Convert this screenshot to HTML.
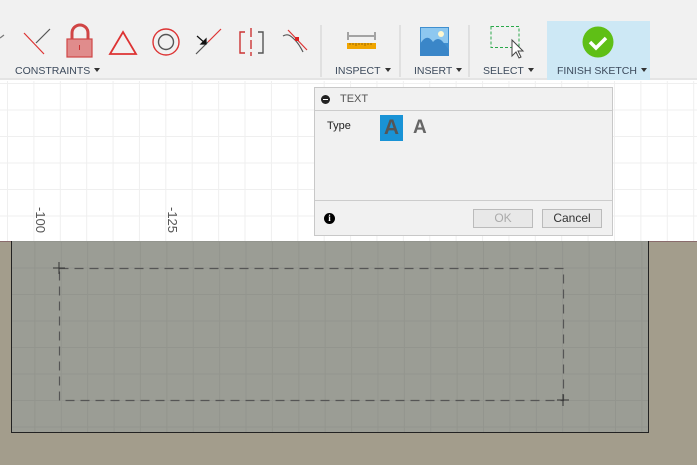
<!DOCTYPE html>
<html><head><style>
*{margin:0;padding:0;box-sizing:border-box}
body{width:697px;height:465px;overflow:hidden;position:relative;font-family:"Liberation Sans",sans-serif;background:#fff}
.tb{position:absolute;left:0;top:0;width:697px;height:80px;background:#f1f1f1;border-bottom:2px solid #e4e4e4}
.lbl{position:absolute;top:65px;font-size:10.5px;color:#3c4a5c;white-space:nowrap}
.lbl:after{content:"";display:inline-block;margin-left:4px;border-left:3px solid transparent;border-right:3px solid transparent;border-top:4px solid #333;vertical-align:2px}
.sep{position:absolute;top:25px;width:2px;height:52px;background:#e0e0e0}
.grid{position:absolute;left:0;top:81px;width:697px;height:160px;background-color:#fff;
background-image:linear-gradient(90deg,#efefef 1px,transparent 1px),linear-gradient(#efefef 1px,transparent 1px);
background-size:26.4px 26.5px;background-position:7px 2px}
.bg{position:absolute;left:0;top:241px;width:697px;height:224px;background:#a39d8c;border-top:1px solid #8a6c6c}
.sk{position:absolute;left:11px;top:241px;width:638px;height:192px;background-color:#9b9d95;border:1px solid #222;border-top:none;
background-image:linear-gradient(90deg,#93958e 1px,transparent 1px),linear-gradient(#93958e 1px,transparent 1px);
background-size:26.4px 26.5px;background-position:-4px 0px}
.rot{position:absolute;font-size:13px;color:#555;transform:rotate(90deg);transform-origin:left top}
.dlg{position:absolute;left:314px;top:87px;width:299px;height:149px;background:#f1f1f1;border:1px solid #c8c8c8}
.btn{position:absolute;top:121px;height:19px;font-size:12px;text-align:center;line-height:17px;border:1px solid #bbb;background:#e8e8e8}
</style></head><body>
<div class="tb">
<svg width="697" height="60" style="position:absolute;left:0;top:0">
<line x1="0" y1="38" x2="4" y2="35" stroke="#777" stroke-width="1.2"/>
<line x1="24" y1="33" x2="44" y2="54" stroke="#d33" stroke-width="1.2"/>
<line x1="36" y1="43" x2="50" y2="29" stroke="#555" stroke-width="1.2"/>
<path d="M72 40v-7a8 8 0 0 1 16 0v7" fill="none" stroke="#d04545" stroke-width="3"/>
<rect x="67" y="39" width="25" height="18" fill="#e08c8c" stroke="#d04545" stroke-width="1.2"/>
<line x1="79.5" y1="45" x2="79.5" y2="50" stroke="#c33"/>
<path d="M123 32L136 54H110Z" fill="none" stroke="#d33" stroke-width="1.8"/>
<circle cx="166" cy="42" r="13" fill="none" stroke="#d33" stroke-width="1.4"/>
<circle cx="166" cy="42" r="7.5" fill="none" stroke="#555" stroke-width="1.4"/>
<line x1="196" y1="54" x2="208" y2="42" stroke="#555" stroke-width="1.2"/>
<line x1="208" y1="42" x2="221" y2="29" stroke="#d33" stroke-width="1.2"/>
<path d="M197 36l9 8M206 44l0-5-5 5z" stroke="#111" fill="#111" stroke-width="1.2"/>
<path d="M245 32h-5v21h5" fill="none" stroke="#c33" stroke-width="1.4"/>
<path d="M258 32h5v21h-5" fill="none" stroke="#555" stroke-width="1.4"/>
<line x1="251" y1="28" x2="251" y2="56" stroke="#c33" stroke-width="1.4" stroke-dasharray="9 3"/>
<line x1="288" y1="30" x2="307" y2="50" stroke="#d33" stroke-width="1.2"/>
<path d="M283 36c5-3 8 0 12 4s6 8 8 12" fill="none" stroke="#555" stroke-width="1.2"/>
<rect x="295" y="37" width="4" height="4" fill="#d22"/>
<line x1="349" y1="36" x2="374" y2="36" stroke="#555"/><path d="M348 32v8M375 32v8" stroke="#555"/>
<rect x="347" y="43" width="29" height="6" fill="#f0a500"/>
<path d="M350 43v2M353 43v2M356 43v3M359 43v2M362 43v2M365 43v3M368 43v2M371 43v2" stroke="#a06a00"/>
<rect x="420" y="27" width="29" height="29" fill="#3f8fd0"/>
<rect x="421" y="28" width="27" height="15" fill="#8ec8f0"/>
<path d="M420 56V44c5-8 9-8 13-2 3-4 7-4 10 0l6 8v6z" fill="#3a86c8"/>
<circle cx="441" cy="34" r="3" fill="#fff8d0"/>
<rect x="491" y="26.5" width="28" height="21" fill="none" stroke="#2aa84a" stroke-dasharray="3 2"/>
<path d="M512 40v16l4-4 3 6 2-1-3-6h5z" fill="#fff" stroke="#444"/>
</svg>
<div class="sep" style="left:320px"></div><div class="sep" style="left:399px"></div><div class="sep" style="left:468px"></div>
<div style="position:absolute;left:547px;top:21px;width:103px;height:59px;background:#cde8f5"></div>
<svg style="position:absolute;left:582px;top:26px" width="32" height="32"><circle cx="16" cy="16" r="15.5" fill="#5fbf16"/><path d="M8 16l6 6 10-10" fill="none" stroke="#fff" stroke-width="3.5"/></svg>
<div class="lbl" style="left:15px">CONSTRAINTS</div>
<div class="lbl" style="left:335px">INSPECT</div>
<div class="lbl" style="left:414px">INSERT</div>
<div class="lbl" style="left:483px">SELECT</div>
<div class="lbl" style="left:557px">FINISH SKETCH</div>
</div>
<div class="grid"></div>
<div class="rot" style="left:48px;top:207px">-100</div>
<div class="rot" style="left:180px;top:207px">-125</div>
<div class="bg"></div>
<div class="sk"></div>
<svg width="697" height="465" style="position:absolute;left:0;top:0">
<rect x="59.5" y="268.5" width="504" height="132" fill="none" stroke="#555" stroke-dasharray="9 6" stroke-width="1.2"/>
<path d="M53 268h12M59 262v12M557 400h12M563 394v12" stroke="#333"/>
</svg>
<div class="dlg">
<div style="height:23px;border-bottom:1px solid #ccc;font-size:11px;color:#555;line-height:22px;padding-left:25px;position:relative">TEXT<span style="position:absolute;left:6px;top:7px;width:9px;height:9px;border-radius:50%;background:#222"></span><span style="position:absolute;left:8px;top:11px;width:5px;height:1px;background:#fff"></span></div>
<div style="position:absolute;left:12px;top:32px;font-size:11px;color:#222">Type</div>
<div style="position:absolute;left:65px;top:27px;width:23px;height:26px;background:#1993d6;color:#555;font-weight:bold;font-size:21px;text-align:center;line-height:26px">A</div>
<div style="position:absolute;left:98px;top:27px;color:#666;font-weight:bold;font-size:19px;line-height:26px">A</div>
<div style="position:absolute;left:0;top:112px;width:297px;border-top:1px solid #ccc"></div>
<div style="position:absolute;left:9px;top:125px;width:11px;height:11px;border-radius:50%;background:#000;color:#fff;font-size:9px;font-weight:bold;text-align:center;line-height:11px;font-family:'Liberation Serif',serif">i</div>
<div class="btn" style="left:158px;width:60px;color:#aaa">OK</div>
<div class="btn" style="left:227px;width:60px;color:#333">Cancel</div>
</div>
</body></html>
